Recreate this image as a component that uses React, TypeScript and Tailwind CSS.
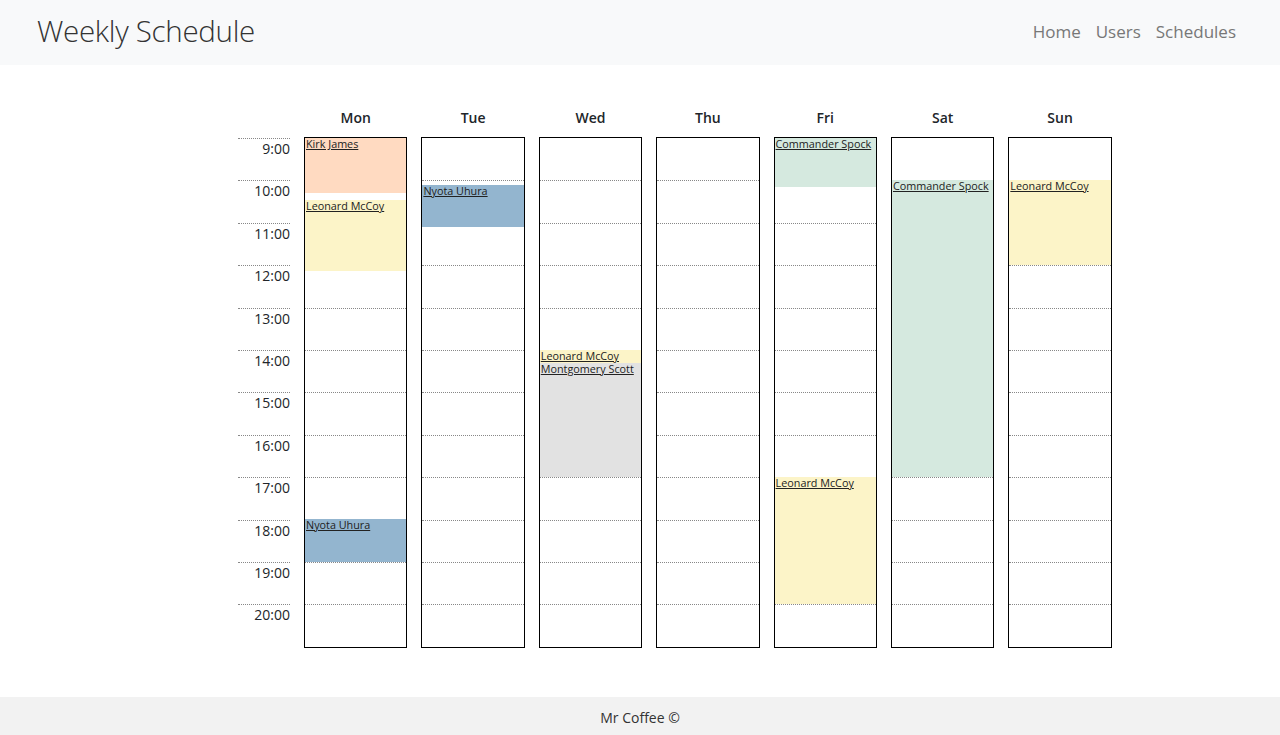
import React from 'react';

type Slot = { name: string; top: number; height: number; color: string };

const HOURS = ['9:00', '10:00', '11:00', '12:00', '13:00', '14:00', '15:00', '16:00', '17:00', '18:00', '19:00', '20:00'];

const PEACH = 'bg-[#ffdac1]';
const YELLOW = 'bg-[#fcf4c8]';
const BLUE = 'bg-[#93b5cf]';
const GREEN = 'bg-[#d5e9df]';
const GREY = 'bg-[#e2e2e2]';

// top / height in px, measured from the top of the column (row = 42.4px)
const days: { label: string; slots: Slot[] }[] = [
  {
    label: 'Mon',
    slots: [
      { name: 'Kirk James', top: 0, height: 55, color: PEACH },
      { name: 'Leonard McCoy', top: 62, height: 71, color: YELLOW },
      { name: 'Nyota Uhura', top: 381, height: 43, color: BLUE },
    ],
  },
  { label: 'Tue', slots: [{ name: 'Nyota Uhura', top: 47, height: 42, color: BLUE }] },
  {
    label: 'Wed',
    slots: [
      { name: 'Leonard McCoy', top: 212, height: 13, color: YELLOW },
      { name: 'Montgomery Scott', top: 225, height: 114, color: GREY },
    ],
  },
  { label: 'Thu', slots: [] },
  {
    label: 'Fri',
    slots: [
      { name: 'Commander Spock', top: 0, height: 49, color: GREEN },
      { name: 'Leonard McCoy', top: 339, height: 127, color: YELLOW },
    ],
  },
  { label: 'Sat', slots: [{ name: 'Commander Spock', top: 42, height: 297, color: GREEN }] },
  { label: 'Sun', slots: [{ name: 'Leonard McCoy', top: 42, height: 85, color: YELLOW }] },
];

function DayColumn({ label, slots }: { label: string; slots: Slot[] }) {
  return (
    <div className="flex flex-col w-[103.4px] shrink-0">
      <div className="h-[29px] text-center text-[14px] font-semibold text-[#212529] leading-[20px]">{label}</div>
      <div className="relative border border-black bg-white">
        {HOURS.map((h, i) => (
          <div
            key={h}
            className={`h-[42.4px] ${i === 0 ? '' : 'border-t border-dotted border-[#888]'}`}
          />
        ))}
        {slots.map((s, i) => (
          <div
            key={i}
            className={`absolute left-0 right-0 px-[1px] ${s.color}`}
            style={{ top: s.top, height: s.height }}
          >
            <a href="#" className="block text-[10.8px] leading-[12px] text-[#222] underline whitespace-nowrap">
              {s.name}
            </a>
          </div>
        ))}
      </div>
    </div>
  );
}

export default function App() {
  return (
    <div className="min-h-screen flex flex-col bg-white font-['Open_Sans','Noto_Sans',sans-serif] text-[#212529]">
      {/* Navbar */}
      <header className="h-[65px] bg-[#f8f9fa] flex items-center justify-between pl-[37px] pr-[44px] pb-[2px]">
        <h1 className="text-[29.5px] font-light text-[#333] tracking-[-0.3px]">Weekly Schedule</h1>
        <nav className="flex gap-[15px] text-[17px] text-[#777]">
          <a href="#">Home</a>
          <a href="#">Users</a>
          <a href="#">Schedules</a>
        </nav>
      </header>

      {/* Schedule */}
      <main className="flex-1 pt-[43px] pl-[238px]">
        <div className="flex gap-[14px]">
          <div className="flex flex-col w-[52px] shrink-0">
            <div className="h-[29px]" />
            <div className="pt-[1px]">
              {HOURS.map((h) => (
                <div key={h} className="h-[42.4px] border-t border-dotted border-[#888] text-right text-[14px] font-normal leading-[20px]">
                  {h}
                </div>
              ))}
            </div>
          </div>
          {days.map((d) => (
            <DayColumn key={d.label} label={d.label} slots={d.slots} />
          ))}
        </div>
      </main>

      {/* Footer */}
      <footer className="h-[38px] bg-[#f2f2f2] flex items-center justify-center pt-[3px] text-[14px] text-[#333]">
        Mr Coffee ©
      </footer>
    </div>
  );
}
